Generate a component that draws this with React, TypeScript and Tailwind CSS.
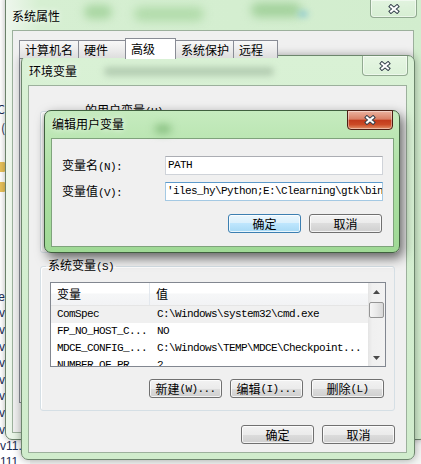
import React from "react";
import clsx from "clsx";

const zh = "font-['Noto_Sans_CJK_SC','Noto_Sans',sans-serif]";
const mono =
  "font-['Liberation_Mono','Noto_Sans_CJK_SC',monospace] text-[11px] tracking-[-0.6px]";

function M({ children }: { children: React.ReactNode }) {
  return <span className={mono}>{children}</span>;
}

function XGlyph() {
  return (
    <svg width="12" height="10" viewBox="0 0 12 10">
      <path d="M3 2.5 L9 7.5 M9 2.5 L3 7.5" stroke="#34404c" strokeWidth="4" strokeLinecap="square" />
      <path d="M3 2.5 L9 7.5 M9 2.5 L3 7.5" stroke="#ffffff" strokeWidth="2" strokeLinecap="square" />
    </svg>
  );
}

function CloseBtn({ active, className }: { active?: boolean; className: string }) {
  return (
    <div
      className={clsx(
        "absolute flex items-center justify-center rounded-b-[4px] border",
        active
          ? "border-[#4c1f14] bg-[linear-gradient(#ebb3a0,#d98066_45%,#c23b1c_52%,#cb4a26_75%,#e39068)] shadow-[inset_0_0_0_1px_rgba(255,255,255,0.4)]"
          : "border-[#6f8a6f]/70 bg-[linear-gradient(rgba(255,255,255,0.35),rgba(255,255,255,0.1))] shadow-[inset_0_0_0_1px_rgba(255,255,255,0.5)]",
        className
      )}
    >
      <XGlyph />
    </div>
  );
}

function Btn({ children, primary }: { children: React.ReactNode; primary?: boolean }) {
  return (
    <div
      className={clsx(
        "flex h-[19px] w-[73px] items-center justify-center rounded-[3px] border text-[12px] leading-[14px] shadow-[inset_0_0_0_1px_rgba(255,255,255,0.75)]",
        primary
          ? "border-[#3c7fb1] bg-[linear-gradient(#eaf6fd,#d9f0fc_50%,#bee6fd_50%,#a7d9f5)]"
          : "border-[#707070] bg-[linear-gradient(#f2f2f2,#ebebeb_50%,#dddddd_50%,#cfcfcf)]"
      )}
    >
      {children}
    </div>
  );
}

function Arrow({ down }: { down?: boolean }) {
  return (
    <svg width="7" height="4" viewBox="0 0 7 4">
      <polygon points={down ? "0,0 7,0 3.5,4" : "3.5,0 7,4 0,4"} fill="#4a4a4a" />
    </svg>
  );
}

function Backdrop() {
  const top = ["C", "(", "", "f", "f"];
  const rows = ["e", "v", "v", "v", "v", "v", "v", "v", "v"];
  return (
    <div className="absolute left-0 top-0 flex h-full w-[30px] flex-col bg-white text-[12px] text-[#1b2c55]">
      <div className="flex flex-col pt-[99px]">
        {top.map((t, i) => (
          <div key={i} className="flex h-[19.5px] w-[5px] items-center justify-end overflow-hidden">
            {t === "f" ? <div className="h-[10px] w-[8px] shrink-0 rounded-[1px] bg-[#e8c15a]" /> : t}
          </div>
        ))}
      </div>
      <div className="flex flex-col pt-[92px] font-['Liberation_Sans',sans-serif]">
        {rows.map((t, i) => (
          <div key={i} className="flex h-[16.6px] w-[5px] items-center justify-end overflow-hidden">
            {t}
          </div>
        ))}
        <div className="h-[16px] font-['Liberation_Sans',sans-serif] leading-[16px]">v11.</div>
        <div className="h-[16px] leading-[16px]">111</div>
      </div>
    </div>
  );
}

function SysProps() {
  const tabs = [
    { t: "计算机名", w: "w-[60px]" },
    { t: "硬件", w: "w-[48px]" },
    { t: "高级", w: "w-[51px]", sel: true },
    { t: "系统保护", w: "w-[59px]" },
    { t: "远程", w: "w-[45px]" },
  ];
  return (
    <div className="absolute left-[5px] top-[-8px] h-[448px] w-[422px] rounded-[7px] border border-[#6a816a] bg-[linear-gradient(90deg,#eef6ed,#d6efd2_8%,#d2edce)] shadow-[0_0_6px_rgba(0,0,0,0.3)]">
      <div className="absolute left-[78px] top-[12px] h-[14px] w-[28px] rounded-full bg-[#a9d6a2] blur-[4px]" />
      <div className="absolute left-[128px] top-[14px] h-[14px] w-[70px] rounded-full bg-[#b1dbaa] blur-[5px]" />
      <div className="absolute left-[245px] top-[10px] h-[14px] w-[50px] rounded-full bg-[#a2d19b] blur-[5px]" />
      <div className="absolute left-[292px] top-[18px] h-[6px] w-[10px] rounded-full bg-[#8fcbd0] blur-[3px]" />
      <div className="relative h-[37px] pl-[6px] pt-[16px] leading-[14px] [text-shadow:0_0_6px_#fff]">系统属性</div>
      <CloseBtn className="left-[364px] top-[6px] h-[19px] w-[47px]" />
      <div className="relative ml-[6px] flex h-[403px] w-[402px] flex-col border border-[#9cb09c] bg-[#f0f0f0] pt-[7px]">
        <div className="z-10 flex items-end pl-[7px]">
          {tabs.map((tab) => (
            <div
              key={tab.t}
              className={clsx(
                "-ml-px flex items-center border border-b-0 border-[#898c95] pl-[5px] leading-[14px]",
                tab.w,
                tab.sel
                  ? "-mb-px h-[21px] bg-white"
                  : "h-[18px] bg-[linear-gradient(#f8f8f8,#ececec_50%,#dedede)]"
              )}
            >
              {tab.t}
            </div>
          ))}
        </div>
        <div className="ml-[6px] h-[345px] w-[390px] border border-[#898c95] bg-white" />
      </div>
    </div>
  );
}

function EnvWindow() {
  const rows = [
    ["ComSpec", "C:\\Windows\\system32\\cmd.exe"],
    ["FP_NO_HOST_C...", "NO"],
    ["MDCE_CONFIG_...", "C:\\Windows\\TEMP\\MDCE\\Checkpoint..."],
    ["NUMBER_OF_PR...", "2"],
  ];
  return (
    <div className="absolute left-[21px] top-[55px] h-[405px] w-[394px] rounded-[7px] border border-[#6d866d] bg-[linear-gradient(#d9f1d5,#d0eccc)] shadow-[0_0_8px_rgba(0,0,0,0.35)]">
      <div className="absolute left-[82px] top-[11px] h-[9px] w-[170px] rounded-full bg-[#b4cdb2] blur-[3px]" />
      <div className="relative h-[29px] pl-[7px] pt-[8px] leading-[14px] [text-shadow:0_0_6px_#fff]">环境变量</div>
      <CloseBtn className="left-[340px] top-[-1px] h-[21px] w-[46px]" />
      <div className="ml-[6px] flex h-[368px] w-[379px] flex-col border border-[#9cb09c] bg-[#f0f0f0] px-[11px]">
        <fieldset className="mt-[17px] h-[150px] rounded-[3px] border border-[#d5dfe5] shadow-[inset_1px_1px_0_#fff]">
          <legend className="ml-[42px] px-[2px] leading-[14px]">
            的用户变量<M>(U)</M>
          </legend>
        </fieldset>
        <fieldset className="mt-[5px] flex flex-col rounded-[3px] border border-[#d5dfe5] pb-[12px] shadow-[inset_1px_1px_0_#fff]">
          <legend className="ml-[5px] px-[2px] leading-[14px]">
            系统变量<M>(S)</M>
          </legend>
          <div className="ml-[9px] mt-[8px] flex h-[85px] w-[336px] border border-[#828790] bg-white">
            <div className="flex flex-1 flex-col overflow-hidden">
              <div className="flex h-[23px] shrink-0 border-b border-[#e5e5e5] bg-[linear-gradient(#ffffff,#ffffff_45%,#f6f7f8_50%,#f2f3f5)]">
                <div className="flex w-[99px] items-center border-r border-[#e3e8ee] pl-[6px] leading-[14px]">变量</div>
                <div className="flex items-center pl-[6px] leading-[14px]">值</div>
              </div>
              {rows.map(([k, v], i) => (
                <div
                  key={k}
                  className={clsx("flex h-[17px] shrink-0 items-center whitespace-nowrap", i === 0 && "bg-[#f0f0f0]")}
                >
                  <div className={clsx("w-[100px] pl-[6px]", mono)}>{k}</div>
                  <div className={clsx("pl-[6px]", mono)}>{v}</div>
                </div>
              ))}
            </div>
            <div className="flex w-[17px] flex-col bg-[linear-gradient(90deg,#e4e4e4,#f0f0f0_25%,#f2f2f2)]">
              <div className="flex h-[17px] items-center justify-center">
                <Arrow />
              </div>
              <div className="mx-[1px] mt-[2px] h-[16px] rounded-[2px] border border-[#959595] bg-[linear-gradient(90deg,#f6f6f6,#e9e9e9_50%,#d8d8d8)]" />
              <div className="flex-1" />
              <div className="flex h-[17px] items-center justify-center">
                <Arrow down />
              </div>
            </div>
          </div>
          <div className="mt-[12px] flex justify-end gap-[8px] pr-[10px]">
            <Btn>
              新建<M>(W)...</M>
            </Btn>
            <Btn>
              编辑<M>(I)...</M>
            </Btn>
            <Btn>
              删除<M>(L)</M>
            </Btn>
          </div>
        </fieldset>
        <div className="mt-[14px] flex justify-end gap-[8px]">
          <Btn>确定</Btn>
          <Btn>取消</Btn>
        </div>
      </div>
    </div>
  );
}

function EditDialog() {
  return (
    <div className="absolute left-[44px] top-[110px] h-[143px] w-[356px] rounded-[7px] border border-[#40603f] bg-[linear-gradient(#c6ebbf,#b0e1a7_40%,#9fd995)] shadow-[3px_5px_12px_rgba(0,0,0,0.6)]">
      <div className="absolute left-[110px] top-[14px] h-[8px] w-[16px] rounded-full bg-[#7fb978] blur-[4px]" />
      <div className="relative h-[27px] pl-[7px] pt-[6px] leading-[14px] [text-shadow:0_0_6px_#fff]">编辑用户变量</div>
      <CloseBtn active className="left-[302px] top-[-1px] h-[20px] w-[46px]" />
      <div className="ml-[6px] flex h-[109px] w-[343px] flex-col border border-[#7fa37c] bg-[#f0f0f0] pt-[17px]">
        <div className="flex h-[19px] items-center">
          <div className="w-[113px] pl-[10px] leading-[14px]">
            变量名<M>(N):</M>
          </div>
          <div className="flex h-[19px] w-[218px] items-center border border-[#cfd3d9] border-t-[#abadb3] bg-white pl-[2px]">
            <span className={mono}>PATH</span>
          </div>
        </div>
        <div className="mt-[7px] flex h-[19px] items-center">
          <div className="w-[113px] pl-[10px] leading-[14px]">
            变量值<M>(V):</M>
          </div>
          <div className="flex h-[19px] w-[218px] items-center overflow-hidden whitespace-nowrap border border-[#a4c9e3] border-t-[#5d9acb] bg-white pl-[1px]">
            <span className={mono}>{"'iles_hy\\Python;E:\\Clearning\\gtk\\bin"}</span>
          </div>
        </div>
        <div className="mt-[13px] flex justify-end gap-[8px] pr-[11px]">
          <Btn primary>确定</Btn>
          <Btn>取消</Btn>
        </div>
      </div>
    </div>
  );
}

export default function App() {
  return (
    <div className={clsx("relative h-[464px] w-[421px] overflow-hidden bg-[#f4f6f4] text-[12px] text-black", zh)}>
      <Backdrop />
      <SysProps />
      <EnvWindow />
      <EditDialog />
    </div>
  );
}
